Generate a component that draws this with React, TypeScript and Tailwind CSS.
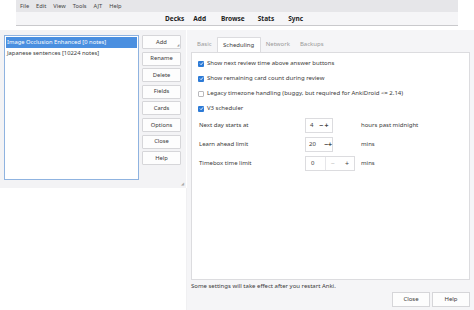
import React from "react";

const F = { fontFamily: '"Noto Sans", "Open Sans", sans-serif' };

function Btn({ label, grip }: { label: string; grip?: boolean }) {
  return (
    <div className="relative flex h-[14px] w-[39px] items-center justify-center rounded-[1px] border border-[#d6d6d9] bg-[#fdfdfd] text-[5.8px] text-[#3a3a3a]">
      {label}
      {grip && <span className="absolute bottom-[1px] right-[1px] text-[3px] text-[#999]">◢</span>}
    </div>
  );
}

function Check({ on, label }: { on: boolean; label: string }) {
  return (
    <div className="flex h-[15px] items-center gap-[3px]">
      {on ? (
        <div className="flex h-[6px] w-[6px] items-center justify-center rounded-[1px] bg-[#2c7ad6]">
          <svg width="5" height="5" viewBox="0 0 10 10">
            <path d="M2 5.2 L4.2 7.4 L8 2.8" stroke="white" strokeWidth="1.8" fill="none" />
          </svg>
        </div>
      ) : (
        <div className="h-[6px] w-[6px] rounded-[1px] border border-[#b9b9bd] bg-white" />
      )}
      <span className="text-[6px] text-[#3a3a3a]">{label}</span>
    </div>
  );
}

export default function App() {
  return (
    <div className="relative h-[310px] w-[474px] overflow-hidden bg-white" style={F}>
      {/* Main window */}
      <div className="absolute left-[16px] top-0 flex w-[442px] flex-col">
        <div className="flex h-[12px] items-center gap-[7px] bg-[#e6e6e9] pl-[4px] text-[5.7px] text-[#444]">
          <span>File</span>
          <span>Edit</span>
          <span>View</span>
          <span>Tools</span>
          <span>AJT</span>
          <span>Help</span>
        </div>
        <div className="flex h-[14px] items-center gap-[9px] border-b border-[#c9c9cc] bg-[#f5f5f7] pl-[149px] text-[6.5px] font-bold text-[#222]">
          <span>Decks</span>
          <span>Add</span>
          <span className="ml-[6px]">Browse</span>
          <span className="ml-[4px]">Stats</span>
          <span className="ml-[5px]">Sync</span>
        </div>
      </div>

      {/* Note types window */}
      <div className="absolute left-0 top-[30px] flex h-[158px] w-[186px] gap-[3px] bg-[#f3f3f5] pl-[4px] pt-[5px]">
        <div className="flex h-[145px] w-[135px] flex-col border border-[#8fb3e0] bg-white p-[1px]">
          <div className="flex h-[11px] items-center bg-[#4a8fe0] px-[1px] text-[5.8px] text-white">
            Image Occlusion Enhanced [0 notes]
          </div>
          <div className="flex h-[11px] items-center px-[1px] text-[5.8px] text-[#3a3a3a]">
            Japanese sentences [10224 notes]
          </div>
        </div>
        <div className="flex flex-col gap-[2.6px]">
          <Btn label="Add" grip />
          <Btn label="Rename" />
          <Btn label="Delete" />
          <Btn label="Fields" />
          <Btn label="Cards" />
          <Btn label="Options" />
          <Btn label="Close" />
          <Btn label="Help" />
        </div>
        <span className="absolute bottom-[1px] right-[2px] text-[4px] text-[#aaa]">◢</span>
      </div>
      <div className="absolute left-[186px] top-[188px] h-[122px] w-[2px] bg-[#f0f0f2]" />

      {/* Preferences window */}
      <div className="absolute left-[187px] top-[30px] flex h-[280px] w-[287px] flex-col bg-[#f5f5f7] px-[4px] pt-[6px]">
        <div className="flex h-[16px] items-end pl-[1px] text-[6px]">
          <div className="flex h-[15px] items-center px-[5px] text-[#999]">Basic</div>
          <div className="-mb-[1px] flex h-[16px] items-center rounded-t-[1px] border border-b-0 border-[#dcdcdf] bg-white px-[5.5px] text-[#3a3a3a]">
            Scheduling
          </div>
          <div className="flex h-[15px] items-center px-[5px] text-[#999]">Network</div>
          <div className="flex h-[15px] items-center px-[5px] text-[#999]">Backups</div>
        </div>
        <div className="flex h-[228px] flex-col border border-[#dcdcdf] bg-white px-[6px] pt-[3px]">
          <Check on label="Show next review time above answer buttons" />
          <Check on label="Show remaining card count during review" />
          <Check on={false} label="Legacy timezone handling (buggy, but required for AnkiDroid <= 2.14)" />
          <Check on label="V3 scheduler" />
          <div className="mt-[2px] flex flex-col gap-[4px] text-[6px] text-[#3a3a3a]">
            <div className="flex h-[15px] items-center">
              <span className="w-[107px] pl-[1px]">Next day starts at</span>
              <div className="flex h-[15px] w-[28px] items-center border border-[#dcdcdf] bg-white pl-[4px]">
                <span className="w-[8px]">4</span>
                <span className="w-[6px] text-center text-[7px] font-bold leading-none text-[#444]">−</span>
                <span className="w-[5px] text-center text-[7px] font-bold leading-none text-[#444]">+</span>
              </div>
              <span className="ml-[28px]">hours past midnight</span>
            </div>
            <div className="flex h-[15px] items-center">
              <span className="w-[107px] pl-[1px]">Learn ahead limit</span>
              <div className="flex h-[15px] w-[28px] items-center border border-[#dcdcdf] bg-white pl-[3px]">
                <span className="w-[15px]">20</span>
                <span className="w-[4px] text-[7px] font-bold leading-none text-[#444]">−</span>
                <span className="text-[7px] font-bold leading-none text-[#444]">+</span>
              </div>
              <span className="ml-[28px]">mins</span>
            </div>
            <div className="flex h-[15px] items-center">
              <span className="w-[107px] pl-[1px]">Timebox time limit</span>
              <div className="flex h-[15px] w-[50px] items-center border border-[#dcdcdf] bg-white">
                <span className="w-[19px] pl-[5px]">0</span>
                <div className="flex h-full flex-1 items-center justify-around border-l border-[#e6e6e9]">
                  <span className="text-[7px] leading-none text-[#bbb]">−</span>
                  <span className="text-[7px] leading-none text-[#444]">+</span>
                </div>
              </div>
              <span className="ml-[6px]">mins</span>
            </div>
          </div>
        </div>
        <div className="mt-[2px] text-[6px] text-[#3a3a3a]">
          Some settings will take effect after you restart Anki.
        </div>
        <div className="mt-[1px] flex justify-end gap-[2px]">
          <div className="flex h-[15px] w-[38px] items-center justify-center border border-[#d6d6d9] bg-[#fdfdfd] text-[6px] text-[#3a3a3a]">Close</div>
          <div className="flex h-[15px] w-[38px] items-center justify-center border border-[#d6d6d9] bg-[#fdfdfd] text-[6px] text-[#3a3a3a]">Help</div>
        </div>
      </div>
    </div>
  );
}
